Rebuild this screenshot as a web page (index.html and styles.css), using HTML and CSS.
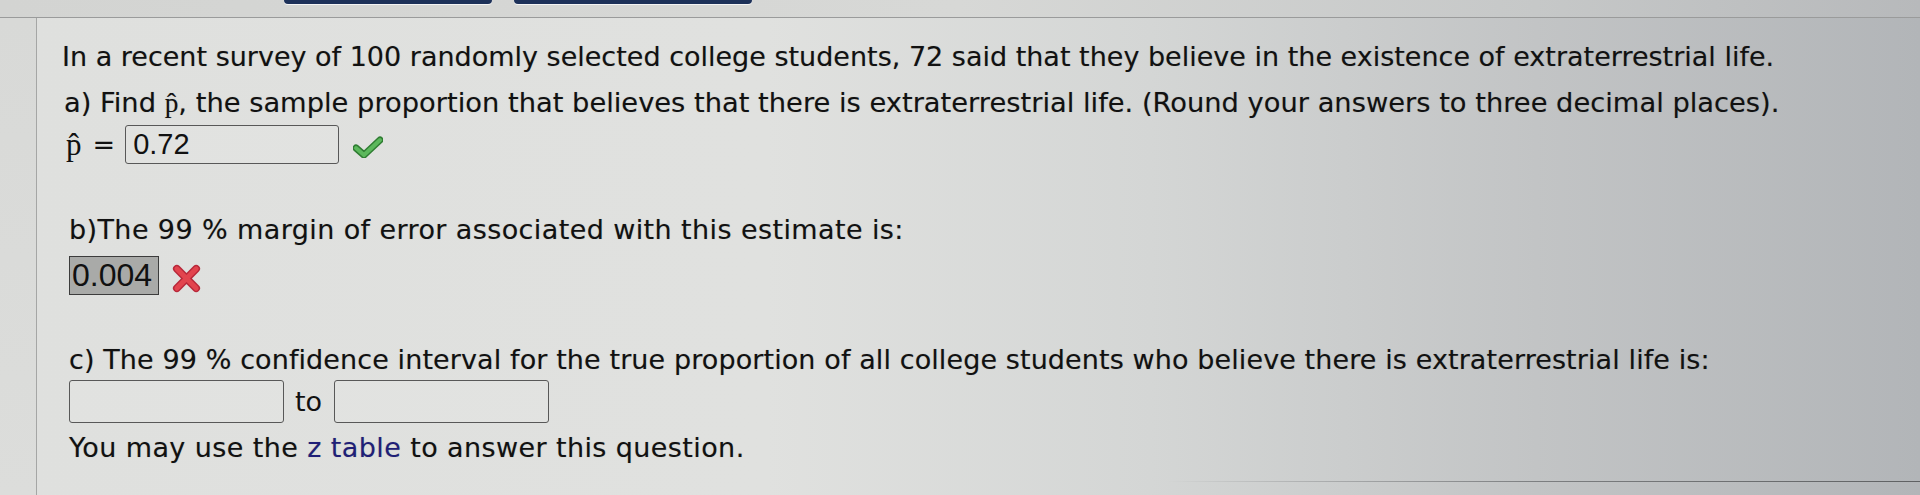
FILE: index.html
```html
<!DOCTYPE html>
<html>
<head>
<meta charset="utf-8">
<link rel="stylesheet" href="styles.css">
</head>
<body>
<div class="top">
  <div class="tab tab-a"></div>
  <div class="tab tab-b"></div>
</div>
<div class="main">
  <div class="gutter"></div>
  <div class="panel">
    <p class="line l1">In a recent survey of 100 randomly selected college students, 72 said that they believe in the existence of extraterrestrial life.</p>
    <p class="line l2">a) Find <span class="phat">p̂</span>, the sample proportion that believes that there is extraterrestrial life. (Round your answers to three decimal places).</p>
    <div class="row row-a">
      <span class="phat big">p̂</span><span class="eq">=</span>
      <span class="field field-a">0.72</span>
      <svg class="check" viewBox="0 0 30 22" width="30" height="22"><path d="M3 12 L11 19 L27 4" fill="none" stroke="#2f7d32" stroke-width="7" stroke-linecap="round" stroke-linejoin="round"/><path d="M3 12 L11 19 L27 4" fill="none" stroke="#5cb85c" stroke-width="4" stroke-linecap="round" stroke-linejoin="round"/></svg>
    </div>
    <p class="line lb">b)The 99 % margin of error associated with this estimate is:</p>
    <div class="row row-b">
      <span class="field field-b">0.004</span>
      <svg class="cross" viewBox="0 0 30 30" width="29" height="29"><path d="M5 5 L25 25 M25 5 L5 25" fill="none" stroke="#b8283a" stroke-width="8" stroke-linecap="round"/><path d="M5 5 L25 25 M25 5 L5 25" fill="none" stroke="#e2444e" stroke-width="5" stroke-linecap="round"/></svg>
    </div>
    <p class="line lc">c) The 99 % confidence interval for the true proportion of all college students who believe there is extraterrestrial life is:</p>
    <div class="row row-c">
      <span class="field field-c"></span>
      <span class="to">to</span>
      <span class="field field-c"></span>
    </div>
    <p class="line ld">You may use the <a class="zlink">z table</a> to answer this question.</p>
  </div>
</div>
</body>
</html>
```
FILE: styles.css
```css
html, body {
  margin: 0;
  padding: 0;
}
body {
  width: 1920px;
  height: 495px;
  overflow: hidden;
  font-family: "DejaVu Sans", Verdana, sans-serif;
  color: #111;
  background: linear-gradient(90deg, #dfe0de 0%, #e0e1df 40%, #d4d6d5 60%, #c2c4c5 80%, #b2b5b8 100%);
}
.top {
  height: 17px;
  border-bottom: 1px solid #9a9b9b;
  display: flex;
  padding-left: 284px;
  gap: 22px;
  background: linear-gradient(90deg, #d3d4d2 0%, #d7d8d6 50%, #c6c8c8 80%, #b7b9bb 100%);
}
.tab {
  height: 4px;
  background: #1d3159;
  border-radius: 0 0 5px 5px;
  box-shadow: 0 1px 0 #f4f4f4;
}
.tab-a { width: 208px; }
.tab-b { width: 238px; }
.main {
  display: flex;
  height: 477px;
}
.gutter {
  width: 36px;
  border-right: 1px solid #a5a6a5;
  background: linear-gradient(180deg, #d8d9d7, #dcdddb);
}
.panel {
  flex: 1;
  box-sizing: border-box;
  height: 464px;
  padding: 17px 0 0 25px;
  font-size: 27px;
  border-bottom: 1px solid transparent;
  border-image: linear-gradient(90deg, rgba(120,120,120,0) 0%, rgba(120,120,120,0) 60%, #7c7e80 80%, #5f6163 100%) 1;
}
.line {
  margin: 0;
  line-height: 44px;
  white-space: nowrap;
  text-shadow: 0 0 1px rgba(0,0,0,0.25);
}
.l2 {
  padding-left: 2px;
  margin-top: 2px;
  font-size: 27.3px;
}
.phat {
  font-family: "Liberation Serif", "DejaVu Serif", serif;
}
.row {
  display: flex;
  align-items: center;
}
.row-a {
  height: 39px;
}
.big {
  font-size: 31px;
  margin-left: 4px;
}
.eq {
  margin-left: 11px;
  margin-right: 10px;
}
.field {
  box-sizing: border-box;
  border: 1px solid #585858;
  border-radius: 3px;
  font-family: "Liberation Sans", Arial, sans-serif;
  font-size: 29px;
  display: flex;
  align-items: center;
  background: rgba(255,255,255,0.08);
}
.field-a {
  width: 214px;
  height: 39px;
  padding-left: 7px;
}
.check {
  margin-left: 14px;
  margin-top: 4px;
}
.lb, .lc, .ld, .row-b, .row-c {
  padding-left: 7px;
}
.lb {
  margin-top: 44px;
  letter-spacing: 0.4px;
}
.row-b {
  height: 39px;
  margin-top: 4px;
}
.field-b {
  width: 90px;
  height: 39px;
  padding-left: 2px;
  font-size: 32px;
  border-radius: 0;
  border-color: #3c3c3c;
  background: #a9aaa8;
}
.cross {
  margin-left: 13px;
  margin-top: 6px;
}
.lc {
  margin-top: 44px;
  padding-top: 2px;
  line-height: 38px;
  letter-spacing: 0.1px;
}
.row-c {
  height: 44px;
}
.field-c {
  width: 215px;
  height: 43px;
}
.to {
  margin: 0 12px 0 11px;
}
.ld {
  padding-top: 3px;
  line-height: 44px;
  letter-spacing: 0.4px;
}
.zlink {
  color: #1f1f78;
  text-decoration: none;
}
```
